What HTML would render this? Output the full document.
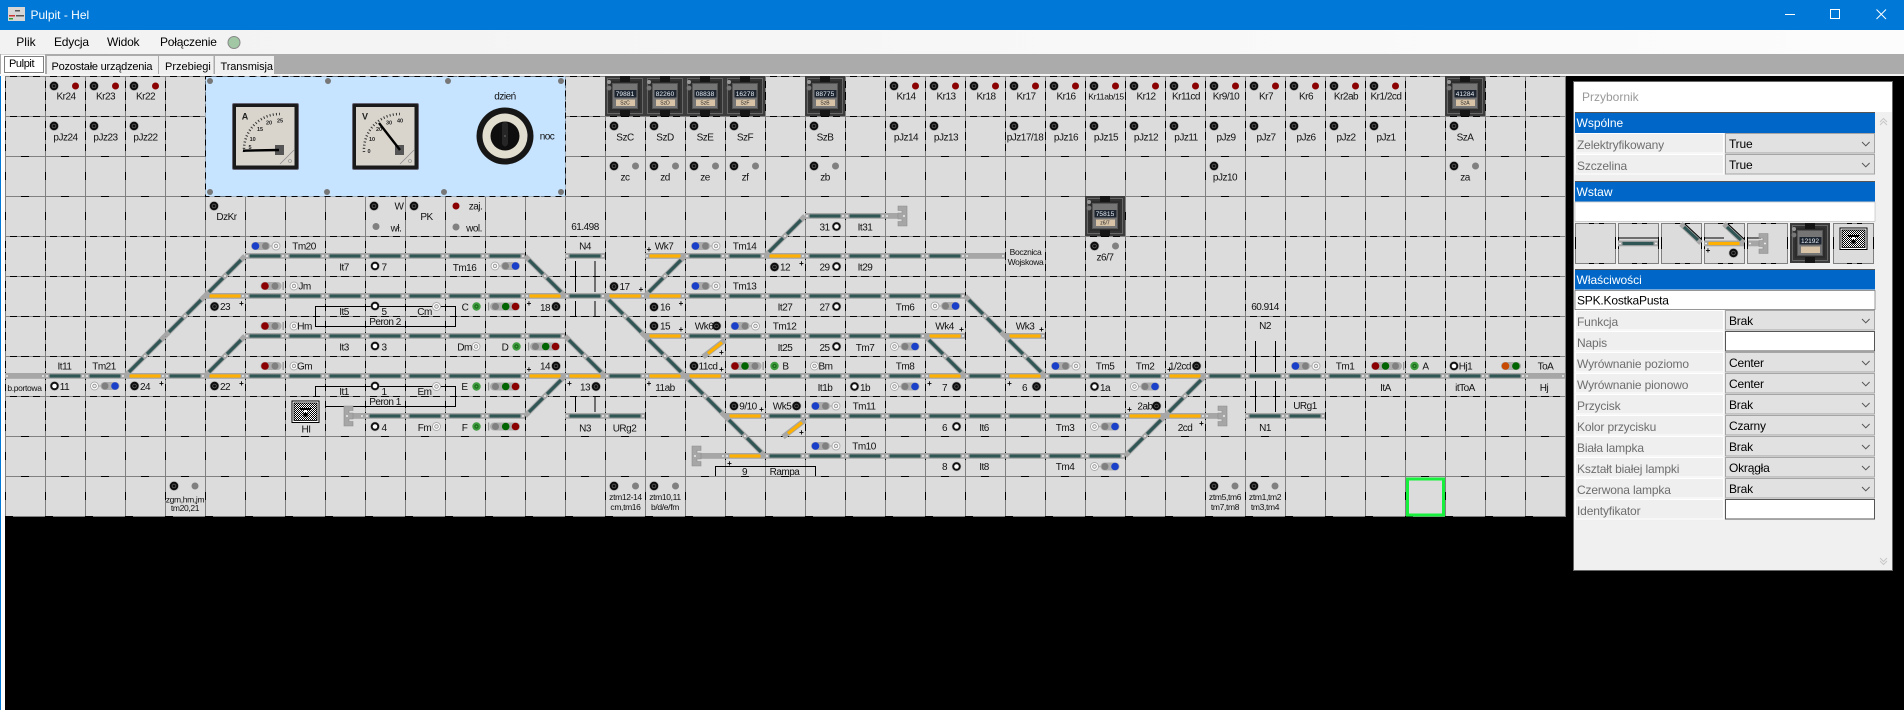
<!DOCTYPE html>
<html lang="pl"><head><meta charset="utf-8"><title>Pulpit - Hel</title>
<style>
html,body{margin:0;padding:0;background:#000;width:1904px;height:710px;overflow:hidden}
svg{display:block;position:absolute;left:0;top:0}
text{font-family:"Liberation Sans",sans-serif}
.l text{font-size:10px;letter-spacing:-.5px;fill:#111;text-anchor:middle}
.s text{font-size:8.5px;letter-spacing:-.35px;fill:#111;text-anchor:middle}
.d text{font-size:6.5px;fill:#e8eef5;text-anchor:middle;letter-spacing:.1px}
.e text{font-size:5px;fill:#222;text-anchor:middle}
.h text{font-size:12px;fill:#fff}
.n text{font-size:12px;fill:#6e6e6e;letter-spacing:-.15px}
.v text{font-size:12px;fill:#000;letter-spacing:-.2px}
.m text{font-size:5.5px;fill:#222;text-anchor:middle;font-weight:bold}
</style></head><body>
<svg width="1904" height="710" viewBox="0 0 1904 710" xmlns="http://www.w3.org/2000/svg">
<defs>
<pattern id="g" x="5" y="76" width="40" height="40" patternUnits="userSpaceOnUse">
<rect width="40" height="40" fill="#dcdcdc"/><rect width="40" height="1" fill="#808080"/><rect width="1" height="40" fill="#808080"/>
<path d="M5 0h7v1h-7zM16 0h8v1h-8zM28 0h7v1h-7zM0 5h1v7h-1zM0 16h1v8h-1zM0 28h1v7h-1z" fill="#000"/>
</pattern>
<pattern id="k" x="5" y="76" width="40" height="40" patternUnits="userSpaceOnUse">
<rect width="40" height="40" fill="#dcdcdc"/><rect width="40" height="1" fill="#808080"/><rect width="1" height="40" fill="#808080"/>
<path d="M16 0h8v1h-8zM0 16h1v8h-1z" fill="#000"/>
</pattern>
<pattern id="chk" width="2" height="2" patternUnits="userSpaceOnUse"><rect width="2" height="2" fill="#fff"/><rect width="1" height="1" fill="#000"/><rect x="1" y="1" width="1" height="1" fill="#000"/></pattern>
<g id="dots"><circle cx="2" cy="0" r=".9" fill="#fff"/><circle cx="38" cy="0" r=".9" fill="#fff"/></g>
<g id="p"><rect y="-3" width="40" height="5.8" fill="#a6a6a6"/><use href="#dots"/></g>
<g id="t"><use href="#p"/><rect x="4.5" y="-1.6" width="31" height="3.2" fill="#2f5554"/></g>
<g id="o"><use href="#p"/><rect x="4.5" y="-1.6" width="31" height="3.2" fill="#ffb000"/></g>
<g id="dd"><path d="M0 0L40 40" stroke="#a6a6a6" stroke-width="5.2" fill="none"/><path d="M4 4L18 18M22 22L36 36" stroke="#2f5554" stroke-width="3.2" fill="none"/><circle cx="20" cy="20" r=".9" fill="#fff"/></g>
<g id="du"><path d="M0 0L40 -40" stroke="#a6a6a6" stroke-width="5.2" fill="none"/><path d="M4 -4L18 -18M22 -22L36 -36" stroke="#2f5554" stroke-width="3.2" fill="none"/><circle cx="20" cy="-20" r=".9" fill="#fff"/></g>
<g id="brR"><path d="M0 -3H4V-5.5H0V-10H9V10H0V5.5H4V3H0Z" fill="#a6a6a6" stroke="#8c8c8c" stroke-width=".6"/><circle cx="6" cy="0" r=".9" fill="#fff"/></g>
<g id="brL"><path d="M0 -3H-4V-5.5H0V-10H-9V10H0V5.5H-4V3H0Z" fill="#a6a6a6" stroke="#8c8c8c" stroke-width=".6"/><circle cx="-6" cy="0" r=".9" fill="#fff"/></g>
<g id="b"><circle r="4.9" fill="#999" opacity=".6"/><circle r="4.2" fill="#0c0c0c"/><circle r="2.3" fill="#555"/><circle r="1.4" fill="#0c0c0c"/></g>
<g id="w"><circle r="4.8" fill="#999" opacity=".6"/><circle r="4.2" fill="#111"/><circle r="2.3" fill="#fff"/></g>
<g id="r"><circle r="4" fill="#fff" stroke="#aaa" stroke-width=".9"/><circle r="1.8" fill="#eee" stroke="#888" stroke-width=".8"/></g>
<g id="lg"><circle r="4.2" fill="#3f9c3f"/><circle r="2.2" fill="#1b6b1b"/><circle r=".9" fill="#4fae4f"/></g>
<circle id="R" r="3.5" fill="#8b0000"/>
<circle id="G" r="3.5" fill="#808080"/>
<g id="sBR"><rect x="-4.5" y="-4" width="19" height="8" rx="4" fill="#acacac"/><circle r="3.8" fill="#1a3fc9"/><circle cx="10" r="3.5" fill="#808080"/><rect x="13" y="-.6" width="4" height="1.2" fill="#b0b0b0"/><use href="#r" x="20.5"/></g>
<g id="sBL"><rect x="6" y="-4" width="19" height="8" rx="4" fill="#acacac"/><rect x="3.5" y="-.6" width="4" height="1.2" fill="#b0b0b0"/><use href="#r"/><circle cx="10.5" r="3.5" fill="#808080"/><circle cx="20.5" r="3.8" fill="#1a3fc9"/></g>
<g id="sRd"><rect x="-4.5" y="-4" width="21" height="8" rx="4" fill="#acacac"/><circle r="3.8" fill="#8b0000"/><circle cx="10" r="3.5" fill="#808080"/><rect x="17.5" y="-4" width="1.3" height="8" fill="#999"/></g>
<g id="sD"><rect x="2" y="-4" width="30" height="8" rx="4" fill="#acacac"/><rect y="-4" width="1.3" height="8" fill="#999"/><circle cx="7.5" r="3.5" fill="#808080"/><circle cx="17.7" r="3.8" fill="#006400"/><circle cx="27.5" r="3.8" fill="#8b0000"/></g>
<g id="sE"><rect x="-4.5" y="-4" width="31" height="8" rx="4" fill="#acacac"/><circle r="3.8" fill="#8b0000"/><circle cx="10" r="3.8" fill="#006400"/><circle cx="20" r="3.5" fill="#808080"/><rect x="27.5" y="-4" width="1.3" height="8" fill="#999"/></g>
<g id="sF"><rect x="-4.5" y="-4" width="20" height="8" rx="4" fill="#acacac"/><circle r="3.8" fill="#c84a00"/><circle cx="10.4" r="3.8" fill="#006400"/></g>
<g id="seg"><rect width="40" height="40" fill="#3c3c3c"/><rect x="2.5" y="2.5" width="35" height="35" fill="#333" stroke="#666" stroke-width="1"/><rect x="5" y="5" width="30" height="30" fill="#2c2c2c"/><rect x="7.5" y="7.5" width="25" height="25" fill="#757575" stroke="#555" stroke-width="1"/><rect x="15" y="0" width="10" height="6" fill="#151515"/><rect x="15" y="34" width="10" height="6" fill="#151515"/><circle cx="4" cy="6" r="2" fill="#999"/><circle cx="4" cy="12" r="2.4" fill="#777"/><rect x="9.5" y="14" width="22" height="7.5" fill="#1d2531"/><rect x="11" y="23.5" width="19" height="6.5" fill="#d8c3a6"/></g>
<g id="hi"><rect width="27" height="21.5" fill="#fff" stroke="#000" stroke-width="1"/><rect x="2" y="2" width="23" height="17.5" fill="url(#chk)" stroke="#000" stroke-width=".8"/><rect x="8" y="7" width="11" height="2" fill="#000"/><rect x="12" y="9" width="3" height="2" fill="#fff"/><rect x="11.5" y="12" width="4" height="3.5" fill="#000"/></g>
<g id="cell"><rect x=".5" y=".5" width="40" height="40" fill="#dcdcdc" stroke="#808080"/><path d="M14 .5h5M24 .5h5M14 40.5h5M24 40.5h5M.5 14v12M40.5 14v12" stroke="#000" fill="none"/></g>
<g id="chev"><path d="M0 0l3.8 3.8l3.8-3.8" stroke="#555" stroke-width="1" fill="none"/></g>
<g id="lab"><rect x=".5" y=".5" width="148" height="19.5" fill="#efefef" stroke="#fff"/></g>
<g id="cmb"><rect x=".5" y=".5" width="149" height="19.5" fill="#e1e1e1" stroke="#a5a5a5"/><use href="#chev" x="137" y="9"/></g>
<g id="txt"><rect x=".5" y=".5" width="149" height="19.5" fill="#fff" stroke="#555"/></g>
</defs>

<rect width="1904" height="710" fill="#000"/>
<rect y="76" width="5" height="634" fill="#fff"/><rect y="30" width="1" height="680" fill="#0078d7"/>
<!-- title -->
<rect width="1904" height="30" fill="#0078d7"/>
<rect x="8" y="7" width="17" height="14" fill="#d6d6d6"/><rect x="9" y="15" width="6" height="1.5" fill="#c33"/><rect x="16" y="15" width="8" height="1.5" fill="#555"/><rect x="9" y="18" width="4" height="1.5" fill="#393"/><rect x="15" y="10" width="5" height="1.5" fill="#555"/>
<text x="30.5" y="19" font-size="12" fill="#fff">Pulpit - Hel</text>
<rect x="1785" y="14" width="10" height="1" fill="#fff"/>
<rect x="1830.5" y="9.5" width="9" height="9" fill="none" stroke="#fff"/>
<path d="M1876.5 9.5l9.5 9.5M1886 9.5l-9.5 9.5" stroke="#fff" stroke-width="1" fill="none"/>
<!-- menu -->
<defs><linearGradient id="mg"><stop offset="0" stop-color="#f2f2f2"/><stop offset="1" stop-color="#fcfcfc"/></linearGradient></defs>
<rect y="30" width="1904" height="24" fill="url(#mg)"/>
<g font-size="12" fill="#000"><text x="16.3" y="46">Plik</text><text x="54" y="46" letter-spacing="-.2">Edycja</text><text x="107" y="46" letter-spacing="-.2">Widok</text><text x="160" y="46" letter-spacing="-.2">Połączenie</text></g>
<circle cx="234" cy="42.5" r="6" fill="#a1c7a4" stroke="#888"/>
<!-- tabs -->
<rect y="54" width="1904" height="20" fill="#ababab"/><rect y="74" width="1904" height="2" fill="#f4f4f4"/>
<rect x="1" y="54.5" width="44" height="20" fill="#fff"/><rect x="4.5" y="56.5" width="39" height="16" fill="none" stroke="#000" stroke-dasharray="1 1"/>
<rect x="47" y="56" width="111" height="18" fill="#f0f0f0"/><rect x="159" y="56" width="54.5" height="18" fill="#f0f0f0"/><rect x="215" y="56" width="59" height="18" fill="#f0f0f0"/>
<g font-size="11" fill="#000"><text x="9" y="67" letter-spacing="-.4">Pulpit</text><text x="51.5" y="70" letter-spacing="-.22">Pozostałe urządzenia</text><text x="165" y="70">Przebiegi</text><text x="220.5" y="70" letter-spacing="-.1">Transmisja</text></g>

<!-- grid -->
<rect x="5" y="76" width="1560" height="440" fill="url(#g)"/>
<rect x="5" y="156" width="1560" height="80" fill="url(#k)"/>
<rect x="5" y="436" width="1560" height="80" fill="url(#k)"/>
<rect x="5" y="516" width="1561" height="1" fill="#808080"/><rect x="1565" y="76" width="1" height="441" fill="#808080"/>
<path d="M5 516.5H1565" stroke="#000" stroke-dasharray="8 32" fill="none"/>

<!-- blue panel -->
<rect x="205.5" y="76.5" width="360" height="120" fill="#c6e3ff" stroke="#000" stroke-dasharray="6 5"/>
<g fill="#777"><circle cx="210" cy="81" r="3"/><circle cx="328" cy="81" r="3"/><circle cx="448" cy="81" r="3"/><circle cx="561" cy="81" r="3"/><circle cx="210" cy="192" r="3"/><circle cx="327" cy="192" r="3"/><circle cx="444" cy="192" r="3"/><circle cx="561" cy="192" r="3"/></g>
<g>
<rect x="232.5" y="103.5" width="66" height="66" rx="1.5" fill="#1a1a1a" stroke="#667"/>
<rect x="236" y="107" width="58.5" height="58.5" fill="#d9d5cd"/>
<path d="M244 152A36 36 0 0 1 280 114" fill="none" stroke="#333" stroke-width="2.5" stroke-dasharray="1 2.2"/>
<path d="M280 164L294 150" stroke="#888" stroke-width=".7"/><circle cx="290" cy="161" r="1.5" fill="none" stroke="#888" stroke-width=".6"/>
<rect x="275" y="145" width="9" height="10" fill="#555"/>
<path d="M243 150.7L279 150" stroke="#000" stroke-width="2.4"/>
<text x="245" y="119.5" font-size="9" font-weight="bold" text-anchor="middle" fill="#222">A</text>
<g class="m"><text x="250" y="149">5</text><text x="252.7" y="141">10</text><text x="260" y="131">15</text><text x="269" y="124.7">20</text><text x="280" y="122.7">25</text></g>
</g>
<g>
<rect x="352.5" y="103.5" width="66" height="66" rx="1.5" fill="#1a1a1a" stroke="#667"/>
<rect x="356" y="107" width="58.5" height="58.5" fill="#d9d5cd"/>
<path d="M364 152A36 36 0 0 1 400 114" fill="none" stroke="#333" stroke-width="2.5" stroke-dasharray="1 2.2"/>
<path d="M400 164L414 150" stroke="#888" stroke-width=".7"/><circle cx="410" cy="161" r="1.5" fill="none" stroke="#888" stroke-width=".6"/>
<rect x="395" y="145" width="9" height="10" fill="#555"/>
<path d="M379 123L400 150" stroke="#000" stroke-width="2.4"/>
<text x="365" y="119.5" font-size="9" font-weight="bold" text-anchor="middle" fill="#222">V</text>
<g class="m"><text x="369" y="153">0</text><text x="372" y="141">10</text><text x="379" y="131">20</text><text x="389" y="124.7">30</text><text x="400" y="122.7">40</text></g>
</g>
<circle cx="505" cy="136" r="28.5" fill="#161616"/><circle cx="505" cy="136" r="22.5" fill="#e2decf"/><circle cx="505" cy="136" r="14.5" fill="#0e0e0e"/>
<path d="M502 124q3-5 6 0v20q-3 5-6 0z" fill="#262626"/><circle cx="505" cy="136" r="1" fill="#555"/>
<g class="l"><text x="505" y="99.5">dzień</text><text x="547" y="139.5">noc</text></g>

<!-- seg tiles -->
<use href="#seg" x="605" y="76"/><use href="#seg" x="645" y="76"/><use href="#seg" x="685" y="76"/><use href="#seg" x="725" y="76"/><use href="#seg" x="805" y="76"/><use href="#seg" x="1445" y="76"/><use href="#seg" x="1085" y="196"/>
<g class="d"><text x="625" y="96">79881</text><text x="665" y="96">82260</text><text x="705" y="96">08838</text><text x="745" y="96">16278</text><text x="825" y="96">88775</text><text x="1465" y="96">41284</text><text x="1105" y="216">75815</text></g>
<g class="e"><text x="625" y="104.5">SzC</text><text x="665" y="104.5">SzD</text><text x="705" y="104.5">SzE</text><text x="745" y="104.5">SzF</text><text x="825" y="104.5">SzB</text><text x="1465" y="104.5">SzA</text><text x="1105" y="224.5">z6/7</text></g>

<!-- platforms + stands -->
<path d="M315.5 326.5V306.5H455.5V326.5H315.5ZM315.5 396V386.5H455.5V406.5H326" fill="none" stroke="#000" stroke-width="1"/>
<path d="M715.5 476V466.5H815.5V476" fill="none" stroke="#000" stroke-width="1"/>
<path d="M575.5 261V292M595 261V292M575.5 301V316M595 301V316M575.5 397V412M595 397V412M1255.5 341V372M1275.5 341V372M1255.5 381V412M1275.5 381V412" stroke="#000" stroke-width="1" fill="none"/>

<!-- tracks y216 -->
<use href="#t" x="805" y="216"/><use href="#t" x="845" y="216"/><rect x="885" y="213" width="17" height="5.8" fill="#a6a6a6"/><circle cx="887" cy="216" r=".9" fill="#fff"/><use href="#brR" x="898" y="216"/>
<!-- y256 -->
<use href="#t" x="245" y="256"/><use href="#t" x="285" y="256"/><use href="#t" x="325" y="256"/><use href="#t" x="365" y="256"/><use href="#t" x="405" y="256"/><use href="#t" x="445" y="256"/><use href="#t" x="485" y="256"/><use href="#t" x="565" y="256"/><use href="#o" x="645" y="256"/><use href="#t" x="685" y="256"/><use href="#t" x="725" y="256"/><use href="#o" x="765" y="256"/><use href="#t" x="805" y="256"/><use href="#t" x="845" y="256"/><use href="#t" x="885" y="256"/><use href="#t" x="925" y="256"/><use href="#p" x="965" y="256"/>
<!-- y296 -->
<use href="#o" x="205" y="296"/><use href="#t" x="245" y="296"/><use href="#t" x="285" y="296"/><use href="#t" x="325" y="296"/><use href="#t" x="365" y="296"/><use href="#t" x="405" y="296"/><use href="#t" x="445" y="296"/><use href="#t" x="485" y="296"/><use href="#o" x="525" y="296"/><use href="#t" x="565" y="296"/><use href="#o" x="605" y="296"/><use href="#o" x="645" y="296"/><use href="#t" x="685" y="296"/><use href="#t" x="725" y="296"/><use href="#t" x="765" y="296"/><use href="#t" x="805" y="296"/><use href="#t" x="845" y="296"/><use href="#t" x="885" y="296"/><use href="#t" x="925" y="296"/>
<!-- y336 -->
<use href="#t" x="245" y="336"/><use href="#t" x="285" y="336"/><use href="#t" x="325" y="336"/><use href="#t" x="365" y="336"/><use href="#t" x="405" y="336"/><use href="#t" x="445" y="336"/><use href="#t" x="485" y="336"/><use href="#t" x="525" y="336"/><use href="#o" x="645" y="336"/><use href="#t" x="685" y="336"/><use href="#t" x="725" y="336"/><use href="#t" x="765" y="336"/><use href="#t" x="805" y="336"/><use href="#t" x="845" y="336"/><use href="#t" x="885" y="336"/><use href="#o" x="925" y="336"/><use href="#o" x="1005" y="336"/>
<!-- y376 -->
<use href="#p" x="5" y="376"/><use href="#t" x="45" y="376"/><use href="#t" x="85" y="376"/><use href="#o" x="125" y="376"/><use href="#t" x="165" y="376"/><use href="#o" x="205" y="376"/><use href="#t" x="245" y="376"/><use href="#t" x="285" y="376"/><use href="#t" x="325" y="376"/><use href="#t" x="365" y="376"/><use href="#t" x="405" y="376"/><use href="#t" x="445" y="376"/><use href="#t" x="485" y="376"/><use href="#o" x="525" y="376"/><use href="#o" x="565" y="376"/><use href="#t" x="605" y="376"/><use href="#o" x="645" y="376"/><use href="#o" x="685" y="376"/><use href="#t" x="725" y="376"/><use href="#t" x="765" y="376"/><use href="#t" x="805" y="376"/><use href="#t" x="845" y="376"/><use href="#t" x="885" y="376"/><use href="#o" x="925" y="376"/><use href="#t" x="965" y="376"/><use href="#o" x="1005" y="376"/><use href="#t" x="1045" y="376"/><use href="#t" x="1085" y="376"/><use href="#t" x="1125" y="376"/><use href="#o" x="1165" y="376"/><use href="#t" x="1205" y="376"/><use href="#t" x="1245" y="376"/><use href="#t" x="1285" y="376"/><use href="#t" x="1325" y="376"/><use href="#t" x="1365" y="376"/><use href="#t" x="1405" y="376"/><use href="#t" x="1445" y="376"/><use href="#t" x="1485" y="376"/><use href="#p" x="1525" y="376"/>
<!-- y416 -->
<rect x="349" y="413" width="16" height="5.8" fill="#a6a6a6"/><circle cx="362" cy="416" r=".9" fill="#fff"/><use href="#brL" x="353" y="416"/>
<use href="#t" x="365" y="416"/><use href="#t" x="405" y="416"/><use href="#t" x="445" y="416"/><use href="#t" x="485" y="416"/><use href="#t" x="565" y="416"/><use href="#t" x="605" y="416"/><use href="#o" x="725" y="416"/><use href="#t" x="765" y="416"/><use href="#t" x="805" y="416"/><use href="#t" x="845" y="416"/><use href="#t" x="885" y="416"/><use href="#t" x="925" y="416"/><use href="#t" x="965" y="416"/><use href="#t" x="1005" y="416"/><use href="#t" x="1045" y="416"/><use href="#t" x="1085" y="416"/><use href="#o" x="1125" y="416"/><use href="#o" x="1165" y="416"/>
<rect x="1205" y="413" width="17" height="5.8" fill="#a6a6a6"/><circle cx="1207" cy="416" r=".9" fill="#fff"/><use href="#brR" x="1218" y="416"/>
<use href="#t" x="1245" y="416"/><use href="#t" x="1285" y="416"/>
<!-- y456 -->
<rect x="697" y="453" width="28" height="5.8" fill="#a6a6a6"/><circle cx="723" cy="456" r=".9" fill="#fff"/><use href="#brL" x="701" y="456"/>
<use href="#o" x="725" y="456"/><use href="#t" x="765" y="456"/><use href="#t" x="805" y="456"/><use href="#t" x="845" y="456"/><use href="#t" x="885" y="456"/><use href="#t" x="925" y="456"/><use href="#t" x="965" y="456"/><use href="#t" x="1005" y="456"/><use href="#t" x="1045" y="456"/><use href="#t" x="1085" y="456"/>
<!-- diagonals -->
<use href="#dd" x="525" y="256"/><use href="#dd" x="605" y="296"/><use href="#dd" x="645" y="336"/><use href="#dd" x="925" y="336"/><use href="#dd" x="965" y="296"/><use href="#dd" x="1005" y="336"/><use href="#dd" x="565" y="336"/><use href="#dd" x="685" y="376"/><use href="#dd" x="725" y="416"/>
<use href="#du" x="125" y="376"/><use href="#du" x="165" y="336"/><use href="#du" x="205" y="296"/><use href="#du" x="205" y="376"/><use href="#du" x="525" y="416"/><use href="#du" x="645" y="296"/><use href="#du" x="765" y="256"/><use href="#du" x="1165" y="416"/><use href="#du" x="1125" y="456"/>
<path d="M725 340L703 357M805 420L783 437" stroke="#a6a6a6" stroke-width="5.5" fill="none"/><path d="M722 342.5L708 353.5M802 422.5L788 433.5" stroke="#ffb000" stroke-width="3.2" fill="none"/>

<!-- HI -->
<use href="#hi" x="292" y="401"/>

<!-- buttons black -->
<use href="#b" x="54" y="86"/><use href="#b" x="94" y="86"/><use href="#b" x="134" y="86"/><use href="#b" x="54" y="126"/><use href="#b" x="94" y="126"/><use href="#b" x="134" y="126"/>
<use href="#b" x="894" y="86"/><use href="#b" x="934" y="86"/><use href="#b" x="974" y="86"/><use href="#b" x="1014" y="86"/><use href="#b" x="1054" y="86"/><use href="#b" x="1094" y="86"/><use href="#b" x="1134" y="86"/><use href="#b" x="1174" y="86"/><use href="#b" x="1214" y="86"/><use href="#b" x="1254" y="86"/><use href="#b" x="1294" y="86"/><use href="#b" x="1334" y="86"/><use href="#b" x="1374" y="86"/>
<use href="#b" x="614" y="126"/><use href="#b" x="654" y="126"/><use href="#b" x="694" y="126"/><use href="#b" x="734" y="126"/><use href="#b" x="814" y="126"/><use href="#b" x="894" y="126"/><use href="#b" x="934" y="126"/><use href="#b" x="1014" y="126"/><use href="#b" x="1054" y="126"/><use href="#b" x="1094" y="126"/><use href="#b" x="1134" y="126"/><use href="#b" x="1174" y="126"/><use href="#b" x="1214" y="126"/><use href="#b" x="1254" y="126"/><use href="#b" x="1294" y="126"/><use href="#b" x="1334" y="126"/><use href="#b" x="1374" y="126"/><use href="#b" x="1454" y="126"/>
<use href="#b" x="614" y="166"/><use href="#b" x="654" y="166"/><use href="#b" x="694" y="166"/><use href="#b" x="734" y="166"/><use href="#b" x="814" y="166"/><use href="#b" x="1214" y="166"/><use href="#b" x="1454" y="166"/>
<use href="#b" x="214" y="206"/><use href="#b" x="374" y="206"/><use href="#b" x="414" y="206"/><use href="#b" x="1094.5" y="246"/>
<use href="#b" x="614" y="286.5"/><use href="#b" x="214.5" y="306.5"/><use href="#b" x="556" y="306.5"/><use href="#b" x="556" y="366"/><use href="#b" x="134.5" y="386"/><use href="#b" x="214.5" y="386"/><use href="#b" x="596" y="386.5"/>
<use href="#b" x="774.5" y="267"/><use href="#b" x="654" y="307"/><use href="#b" x="654" y="326"/><use href="#b" x="716.5" y="326"/><use href="#b" x="694" y="366"/><use href="#b" x="956.5" y="386.5"/><use href="#b" x="1036.5" y="386.5"/><use href="#b" x="734" y="406"/><use href="#b" x="796.5" y="406"/><use href="#b" x="1156.5" y="406"/><use href="#b" x="1196.5" y="366"/>
<use href="#b" x="174" y="486"/><use href="#b" x="614" y="486"/><use href="#b" x="654" y="486"/><use href="#b" x="1214" y="486"/><use href="#b" x="1254" y="486"/>
<!-- ring buttons -->
<use href="#w" x="375" y="266"/><use href="#w" x="375" y="306"/><use href="#w" x="375" y="346"/><use href="#w" x="375" y="386"/><use href="#w" x="375" y="426.5"/><use href="#w" x="54.5" y="386"/><use href="#w" x="836.5" y="226.5"/><use href="#w" x="836.5" y="266.5"/><use href="#w" x="836.5" y="306.5"/><use href="#w" x="836.5" y="346.5"/><use href="#w" x="854.5" y="386.5"/><use href="#w" x="956.5" y="426.5"/><use href="#w" x="956.5" y="466.5"/><use href="#w" x="1094.5" y="386.5"/><use href="#w" x="1454" y="366"/>
<!-- lamps -->
<use href="#R" x="75.5" y="86"/><use href="#R" x="115.5" y="86"/><use href="#R" x="155.5" y="86"/>
<use href="#R" x="915.5" y="86"/><use href="#R" x="955.5" y="86"/><use href="#R" x="995.5" y="86"/><use href="#R" x="1035.5" y="86"/><use href="#R" x="1075.5" y="86"/><use href="#R" x="1115.5" y="86"/><use href="#R" x="1155.5" y="86"/><use href="#R" x="1195.5" y="86"/><use href="#R" x="1235.5" y="86"/><use href="#R" x="1275.5" y="86"/><use href="#R" x="1315.5" y="86"/><use href="#R" x="1355.5" y="86"/><use href="#R" x="1395.5" y="86"/><use href="#R" x="456" y="206"/>
<use href="#G" x="635.5" y="166"/><use href="#G" x="675.5" y="166"/><use href="#G" x="715.5" y="166"/><use href="#G" x="755.5" y="166"/><use href="#G" x="835.5" y="166"/><use href="#G" x="1475.5" y="166"/><use href="#G" x="376" y="226.5"/><use href="#G" x="456" y="227"/><use href="#G" x="1115.5" y="246"/><use href="#G" x="195" y="486"/><use href="#G" x="635.5" y="486"/><use href="#G" x="675.5" y="486"/><use href="#G" x="1235" y="486"/><use href="#G" x="1275" y="486"/>
<!-- white ring lamps -->
<use href="#r" x="294" y="286"/><use href="#r" x="294" y="326"/><use href="#r" x="294" y="366"/><use href="#r" x="436.5" y="306.5"/><use href="#r" x="476" y="346.5"/><use href="#r" x="436.5" y="386.5"/><use href="#r" x="436.5" y="426.5"/><use href="#r" x="814.5" y="366"/>
<!-- green lamps -->
<use href="#lg" x="476.5" y="306.5"/><use href="#lg" x="516.5" y="346.5"/><use href="#lg" x="476.5" y="386.5"/><use href="#lg" x="476.5" y="426.5"/><use href="#lg" x="774.5" y="366"/><use href="#lg" x="1414.5" y="366"/>
<!-- signals -->
<use href="#sBR" x="255.5" y="246"/><use href="#sBL" x="495" y="266"/><use href="#sBL" x="94.5" y="386"/><use href="#sBR" x="695.5" y="246"/><use href="#sBR" x="695.5" y="286"/><use href="#sBL" x="935" y="306"/><use href="#sBR" x="735" y="326"/><use href="#sBL" x="894.5" y="346.5"/><use href="#sBL" x="894.5" y="386.5"/><use href="#sBR" x="1055.5" y="366"/><use href="#sBL" x="1134.5" y="386.5"/><use href="#sBR" x="815.5" y="406"/><use href="#sBL" x="1094.5" y="426.5"/><use href="#sBR" x="815.5" y="446"/><use href="#sBL" x="1094.5" y="466.5"/><use href="#sBR" x="1295.5" y="366"/>
<use href="#sRd" x="265" y="286"/><use href="#sRd" x="265" y="326"/><use href="#sRd" x="265" y="366"/>
<use href="#sD" x="488" y="306.5"/><use href="#sD" x="528" y="346.5"/><use href="#sD" x="488" y="386.5"/><use href="#sD" x="488" y="426.5"/>
<use href="#sE" x="735" y="366"/><use href="#sE" x="1375.5" y="366"/><use href="#sF" x="1505.5" y="366"/>

<!-- green selection -->
<rect x="1407.5" y="479" width="36" height="36" fill="none" stroke="#17f03c" stroke-width="3"/>

<!-- labels -->
<g class="l">
<text x="66" y="99.5">Kr24</text><text x="105.5" y="99.5">Kr23</text><text x="145.5" y="99.5">Kr22</text>
<text x="65.5" y="140.5">pJz24</text><text x="105.5" y="140.5">pJz23</text><text x="145.5" y="140.5">pJz22</text>
<text x="906" y="99.5">Kr14</text><text x="946" y="99.5">Kr13</text><text x="986" y="99.5">Kr18</text><text x="1026" y="99.5">Kr17</text><text x="1066" y="99.5">Kr16</text><text x="1146" y="99.5">Kr12</text><text x="1186" y="99.5">Kr11cd</text><text x="1226" y="99.5">Kr9/10</text><text x="1266" y="99.5">Kr7</text><text x="1306" y="99.5">Kr6</text><text x="1346" y="99.5">Kr2ab</text><text x="1386" y="99.5">Kr1/2cd</text>
<text x="625" y="140.5">SzC</text><text x="665" y="140.5">SzD</text><text x="705" y="140.5">SzE</text><text x="745" y="140.5">SzF</text><text x="825" y="140.5">SzB</text><text x="1465" y="140.5">SzA</text>
<text x="906" y="140.5">pJz14</text><text x="946" y="140.5">pJz13</text><text x="1025" y="140.5">pJz17/18</text><text x="1066" y="140.5">pJz16</text><text x="1106" y="140.5">pJz15</text><text x="1146" y="140.5">pJz12</text><text x="1186" y="140.5">pJz11</text><text x="1226" y="140.5">pJz9</text><text x="1266" y="140.5">pJz7</text><text x="1306" y="140.5">pJz6</text><text x="1346" y="140.5">pJz2</text><text x="1386" y="140.5">pJz1</text>
<text x="625" y="180.5">zc</text><text x="665" y="180.5">zd</text><text x="705" y="180.5">ze</text><text x="745" y="180.5">zf</text><text x="825" y="180.5">zb</text><text x="1225" y="180.5">pJz10</text><text x="1465" y="180.5">za</text>
<text x="226.5" y="220">DzKr</text><text x="399" y="209.5">W</text><text x="396" y="231.5">wł.</text><text x="426.5" y="220">PK</text><text x="475.5" y="209.5">zaj.</text><text x="474" y="231.5">wol.</text><text x="585" y="230">61.498</text>
<text x="304" y="249.5">Tm20</text><text x="585" y="249.5">N4</text><text x="664" y="249.5">Wk7</text><text x="744.5" y="249.5">Tm14</text><text x="1105" y="260.5">z6/7</text>
<text x="824.5" y="230.5">31</text><text x="865" y="230.5">It31</text>
<text x="344" y="270.5">It7</text><text x="384" y="270.5">7</text><text x="464.5" y="271">Tm16</text><text x="785" y="270.5">12</text><text x="824.5" y="270.5">29</text><text x="865" y="270.5">It29</text>
<text x="304.5" y="289.5">Jm</text><text x="624.5" y="290">17</text><text x="744.5" y="289.5">Tm13</text>
<text x="225" y="310">23</text><text x="344" y="315">It5</text><text x="384" y="315">5</text><text x="424.5" y="315">Cm</text><text x="465" y="310.5">C</text><text x="545" y="311">18</text><text x="385" y="325">Peron 2</text><text x="665" y="310.5">16</text><text x="785" y="310.5">It27</text><text x="824.5" y="310.5">27</text><text x="905" y="310.5">Tm6</text><text x="1265" y="310">60.914</text>
<text x="304.5" y="329.5">Hm</text><text x="665" y="329.5">15</text><text x="704" y="329.5">Wk6</text><text x="784.5" y="329.5">Tm12</text><text x="944.5" y="329.5">Wk4</text><text x="1025" y="329.5">Wk3</text><text x="1265" y="329">N2</text>
<text x="344" y="350.5">It3</text><text x="384" y="350.5">3</text><text x="464.5" y="350.5">Dm</text><text x="505" y="350.5">D</text><text x="785" y="351">It25</text><text x="824.5" y="351">25</text><text x="865" y="351">Tm7</text>
<text x="64.5" y="369.5">It11</text><text x="104" y="369.5">Tm21</text><text x="304.5" y="369.5">Gm</text><text x="545" y="369.5">14</text><text x="708" y="369.5">11cd</text><text x="785.5" y="369.5">B</text><text x="825.5" y="369.5">Bm</text><text x="905" y="369.5">Tm8</text><text x="1105" y="369.5">Tm5</text><text x="1145" y="369.5">Tm2</text><text x="1180" y="369.5">1/2cd</text><text x="1345" y="369.5">Tm1</text><text x="1425.5" y="369.5">A</text><text x="1465.5" y="369.5">Hj1</text><text x="1545.5" y="369.5">ToA</text>
<text x="64.5" y="390">11</text><text x="145" y="390">24</text><text x="225" y="390">22</text><text x="344" y="395">It1</text><text x="384" y="395">1</text><text x="424.5" y="395">Em</text><text x="464.5" y="390">E</text><text x="585" y="390.5">13</text><text x="385" y="405">Peron 1</text>
<text x="665" y="391">11ab</text><text x="825" y="391">It1b</text><text x="865" y="391">1b</text><text x="944.5" y="391">7</text><text x="1024.5" y="391">6</text><text x="1105" y="391">1a</text><text x="1385.5" y="391">ItA</text><text x="1465" y="391">itToA</text><text x="1544" y="391">Hj</text>
<text x="748" y="409.5">9/10</text><text x="782" y="409.5">Wk5</text><text x="864" y="409.5">Tm11</text><text x="1145" y="409.5">2ab</text><text x="1305" y="409">URg1</text>
<text x="384" y="431">4</text><text x="424.5" y="431">Fm</text><text x="464.5" y="431">F</text><text x="306" y="432.5">HI</text><text x="585" y="431.5">N3</text><text x="624.5" y="431.5">URg2</text><text x="944.5" y="431">6</text><text x="984" y="431">It6</text><text x="1065" y="431">Tm3</text><text x="1185" y="431">2cd</text><text x="1265" y="431">N1</text>
<text x="864" y="449.5">Tm10</text>
<text x="744.5" y="475">9</text><text x="784.5" y="475">Rampa</text><text x="944.5" y="470">8</text><text x="984" y="470">It8</text><text x="1065" y="470">Tm4</text>
</g>
<g class="s">
<text x="1106" y="99.5" font-size="8">Kr11ab/15</text>
<text x="1025.5" y="255">Bocznica</text><text x="1025.5" y="265">Wojskowa</text>
<text x="24.5" y="391">b.portowa</text>
<text x="185" y="502.5">zgm,hm,jm</text><text x="185" y="511">tm20,21</text>
<text x="625.5" y="500">ztm12-14</text><text x="625.5" y="510">cm,tm16</text>
<text x="665" y="500">ztm10,11</text><text x="665" y="510">b/d/e/fm</text>
<text x="1225" y="500">ztm5,tm6</text><text x="1225" y="510">tm7,tm8</text>
<text x="1265" y="500">ztm1,tm2</text><text x="1265" y="510">tm3,tm4</text>
</g>
<!-- plus marks -->
<g font-size="8" font-weight="bold" fill="#000" text-anchor="middle"><text x="241.5" y="306">+</text><text x="529" y="306">+</text><text x="529" y="372">+</text><text x="161.5" y="386">+</text><text x="241.5" y="386">+</text><text x="569.5" y="386">+</text><text x="649" y="252">+</text><text x="801.5" y="266">+</text><text x="641" y="292">+</text><text x="681" y="306">+</text><text x="681" y="332">+</text><text x="961.5" y="332">+</text><text x="1041.5" y="332">+</text><text x="721.5" y="355">+</text><text x="721.5" y="372">+</text><text x="649" y="386">+</text><text x="929.5" y="386">+</text><text x="1009.5" y="386">+</text><text x="1169.5" y="372">+</text><text x="761.5" y="412">+</text><text x="1129.5" y="412">+</text><text x="801.5" y="435">+</text><text x="729.5" y="466">+</text><text x="1201.5" y="426">+</text></g>

<!-- right panel -->
<rect x="1573.5" y="81.5" width="319" height="489" fill="#f0f0f0" stroke="#666"/>
<rect x="1574" y="82" width="318" height="30" fill="#fff"/>
<text x="1582" y="101" font-size="12" fill="#999">Przybornik</text>
<path d="M1880 122l3.5-3.5l3.5 3.5M1880 125l3.5-3.5l3.5 3.5" stroke="#c8c8c8" fill="none"/>
<path d="M1880 558l3.5 3.5l3.5-3.5M1880 561l3.5 3.5l3.5-3.5" stroke="#c8c8c8" fill="none"/>
<rect x="1575" y="112" width="300" height="409" fill="#efefef"/>
<rect x="1575" y="112.5" width="300" height="20.5" fill="#0067c8"/><rect x="1575" y="112" width="300" height="1" fill="#555"/>
<rect x="1575" y="181" width="300" height="20.5" fill="#0067c8"/><rect x="1575" y="181" width="300" height="1" fill="#555"/>
<rect x="1575" y="269" width="300" height="20.5" fill="#0067c8"/><rect x="1575" y="269" width="300" height="1" fill="#555"/>
<g class="h"><text x="1576.5" y="127">Wspólne</text><text x="1576.5" y="196">Wstaw</text><text x="1576.5" y="284">Właściwości</text></g>
<use href="#lab" x="1575" y="133"/><use href="#lab" x="1575" y="154"/>
<use href="#cmb" x="1725" y="133"/><use href="#cmb" x="1725" y="154"/>
<rect x="1575" y="202" width="300" height="19.5" fill="#fff" stroke="#aaa" stroke-width=".5"/>
<rect x="1575" y="290.5" width="300" height="19" fill="#fff" stroke="#555" stroke-width=".6"/>
<text x="1577" y="304.5" font-size="12" fill="#000" letter-spacing="-.2">SPK.KostkaPusta</text>
<use href="#lab" x="1575" y="310"/><use href="#lab" x="1575" y="331"/><use href="#lab" x="1575" y="352"/><use href="#lab" x="1575" y="373"/><use href="#lab" x="1575" y="394"/><use href="#lab" x="1575" y="415"/><use href="#lab" x="1575" y="436"/><use href="#lab" x="1575" y="457"/><use href="#lab" x="1575" y="478"/><use href="#lab" x="1575" y="499"/>
<use href="#cmb" x="1725" y="310"/><use href="#txt" x="1725" y="331"/><use href="#cmb" x="1725" y="352"/><use href="#cmb" x="1725" y="373"/><use href="#cmb" x="1725" y="394"/><use href="#cmb" x="1725" y="415"/><use href="#cmb" x="1725" y="436"/><use href="#cmb" x="1725" y="457"/><use href="#cmb" x="1725" y="478"/><use href="#txt" x="1725" y="499"/>
<g class="n">
<text x="1577" y="149">Zelektryfikowany</text><text x="1577" y="170">Szczelina</text>
<text x="1577" y="326">Funkcja</text><text x="1577" y="347">Napis</text><text x="1577" y="368">Wyrównanie poziomo</text><text x="1577" y="389">Wyrównanie pionowo</text><text x="1577" y="410">Przycisk</text><text x="1577" y="431">Kolor przycisku</text><text x="1577" y="452">Biała lampka</text><text x="1577" y="473">Kształt białej lampki</text><text x="1577" y="494">Czerwona lampka</text><text x="1577" y="515">Identyfikator</text>
</g>
<g class="v">
<text x="1729" y="148">True</text><text x="1729" y="169">True</text>
<text x="1729" y="325">Brak</text><text x="1729" y="367">Center</text><text x="1729" y="388">Center</text><text x="1729" y="409">Brak</text><text x="1729" y="430">Czarny</text><text x="1729" y="451">Brak</text><text x="1729" y="472">Okrągła</text><text x="1729" y="493">Brak</text>
</g>
<!-- toolbox -->
<use href="#cell" x="1575" y="223"/>
<g transform="translate(1618 223)"><use href="#cell"/><path d="M1 15H40" stroke="#000"/><use href="#t" y="20.5"/></g>
<g transform="translate(1661 223)"><use href="#cell"/><path d="M20 1L40 20" stroke="#a6a6a6" stroke-width="5.2" fill="none"/><path d="M23 4L37 17" stroke="#2f5554" stroke-width="3.2" fill="none"/><path d="M24 1L40 16" stroke="#000" fill="none"/></g>
<g transform="translate(1704 223)"><use href="#cell"/><path d="M1 15H20" stroke="#000"/><use href="#o" y="20.5"/><path d="M20 1L40 20" stroke="#a6a6a6" stroke-width="5.2" fill="none"/><path d="M23 4L37 17" stroke="#2f5554" stroke-width="3.2" fill="none"/><path d="M24 1L40 16" stroke="#000" fill="none"/><use href="#b" x="29.5" y="30"/><text x="4" y="30" font-size="8" font-weight="bold" text-anchor="middle">+</text></g>
<g transform="translate(1747 223)"><use href="#cell"/><path d="M1 15H14" stroke="#000"/><rect x="1" y="17.5" width="14" height="5.8" fill="#a6a6a6"/><circle cx="3" cy="20.5" r=".9" fill="#fff"/><use href="#brR" x="12" y="20.5"/></g>
<use href="#seg" x="1790" y="223"/><text x="1810" y="243" font-size="6.5" fill="#e8eef5" text-anchor="middle">12192</text>
<g transform="translate(1833 223)"><use href="#cell"/><use href="#hi" x="7" y="5"/></g>
</svg>
</body></html>
